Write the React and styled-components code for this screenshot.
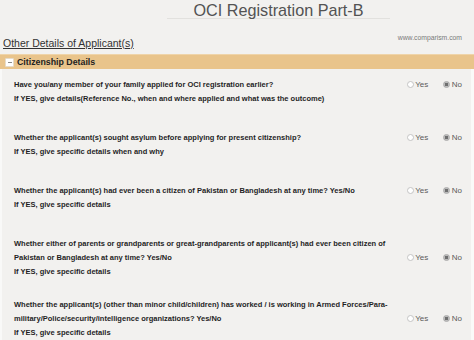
import React from 'react';
import styled, { createGlobalStyle } from 'styled-components';

const GlobalStyle = createGlobalStyle`
  html, body {
    margin: 0;
    padding: 0;
  }
  body {
    background: #f2f1ef;
    font-family: "Liberation Sans", Arial, Helvetica, sans-serif;
  }
`;

const questions = [
  {
    lines: [
      'Have you/any member of your family applied for OCI registration earlier?',
      'If YES, give details(Reference No., when and where applied and what was the outcome)',
    ],
    radioLine: 0,
  },
  {
    lines: [
      'Whether the applicant(s) sought asylum before applying for present citizenship?',
      'If YES, give specific details when and why',
    ],
    radioLine: 0,
  },
  {
    lines: [
      'Whether the applicant(s) had ever been a citizen of Pakistan or Bangladesh at any time? Yes/No',
      'If YES, give specific details',
    ],
    radioLine: 0,
  },
  {
    lines: [
      'Whether either of parents or grandparents or great-grandparents of applicant(s) had ever been citizen of',
      'Pakistan or Bangladesh at any time? Yes/No',
      'If YES, give specific details',
    ],
    radioLine: 1,
    after: 11,
  },
  {
    lines: [
      'Whether the applicant(s) (other than minor child/children) has worked / is working in Armed Forces/Para-',
      'military/Police/security/intelligence organizations? Yes/No',
      'If YES, give specific details',
    ],
    radioLine: 1,
  },
];

const App = () => {
  return (
    <Page>
      <GlobalStyle />
      <Title>OCI Registration Part-B</Title>
      <SectionRow>
        <SectionName>Other Details of Applicant(s)</SectionName>
        <Watermark>www.comparism.com</Watermark>
      </SectionRow>
      <GroupBar>
        <Toggle />
        <GroupName>Citizenship Details</GroupName>
      </GroupBar>
      <Panel>
        {questions.map((q, i) => (
          <Block key={i} $after={q.after}>
            {q.lines.map((line, j) => (
              <Line key={j}>
                <Text>{line}</Text>
                {j === q.radioLine && (
                  <Choices>
                    <Choice>
                      <Radio />
                      Yes
                    </Choice>
                    <Choice>
                      <Radio $checked />
                      No
                    </Choice>
                  </Choices>
                )}
              </Line>
            ))}
          </Block>
        ))}
      </Panel>
    </Page>
  );
};
export default App;

const Page = styled.div`
  width: 474px;
  height: 340px;
  overflow: hidden;
  background: #f2f1ef;
`;

const Title = styled.h1`
  margin: 0 0 0 167px;
  width: 223px;
  padding-top: 2px;
  text-align: center;
  font-size: 16.2px;
  line-height: 16px;
  font-weight: 400;
  color: #535353;
  border-bottom: 1px solid #e2e1de;
`;

const SectionRow = styled.div`
  display: flex;
  justify-content: space-between;
  align-items: flex-start;
  margin-top: 17px;
  padding: 0 12px 0 3px;
  height: 14px;
`;

const SectionName = styled.div`
  font-size: 10.5px;
  line-height: 14px;
  color: #333333;
  text-decoration: underline;
`;

const Watermark = styled.div`
  margin-top: -2px;
  font-size: 6.8px;
  line-height: 8px;
  color: #7a7a7a;
`;

const GroupBar = styled.div`
  display: flex;
  align-items: center;
  gap: 3px;
  margin-top: 4px;
  height: 15px;
  box-sizing: border-box;
  padding-left: 5px;
  background: #e9c48b;
  border-top: 1px solid #efd4a9;
`;

const Toggle = styled.span`
  position: relative;
  width: 9px;
  height: 9px;
  box-sizing: border-box;
  background: #ffffff;
  border: 1px solid #e6dccb;
  border-radius: 1px;

  &::after {
    content: '';
    position: absolute;
    left: 1.5px;
    top: 3px;
    width: 4px;
    height: 1px;
    background: #8a8a8a;
  }
`;

const GroupName = styled.span`
  font-size: 8.8px;
  font-weight: 700;
  color: #222222;
`;

const Panel = styled.div`
  border-left: 2px solid #f9f9f8;
  border-right: 3px solid #fafaf9;
  padding-bottom: 20px;
`;

const Block = styled.div`
  padding-top: 8px;
  padding-bottom: ${(props) => (props.$after ?? 17)}px;
`;

const Line = styled.div`
  display: flex;
  align-items: center;
  justify-content: space-between;
  height: 14px;
  padding: 0 9px 0 12px;
`;

const Text = styled.span`
  white-space: nowrap;
  font-size: 7.5px;
  font-weight: 700;
  color: #1f1f1f;
`;

const Choices = styled.div`
  display: flex;
  align-items: center;
  gap: 15px;
`;

const Choice = styled.label`
  display: flex;
  align-items: center;
  gap: 1.5px;
  font-size: 8px;
  color: #5a5a5a;
`;

const Radio = styled.span`
  width: 7px;
  height: 7px;
  box-sizing: border-box;
  border-radius: 50%;
  border: 1px solid ${(props) => (props.$checked ? '#a9a9a9' : '#c4c4c4')};
  background: ${(props) =>
    props.$checked
      ? 'radial-gradient(circle, #6f6f6f 0 1.6px, #bdbdbd 1.9px)'
      : '#ffffff'};
`;
